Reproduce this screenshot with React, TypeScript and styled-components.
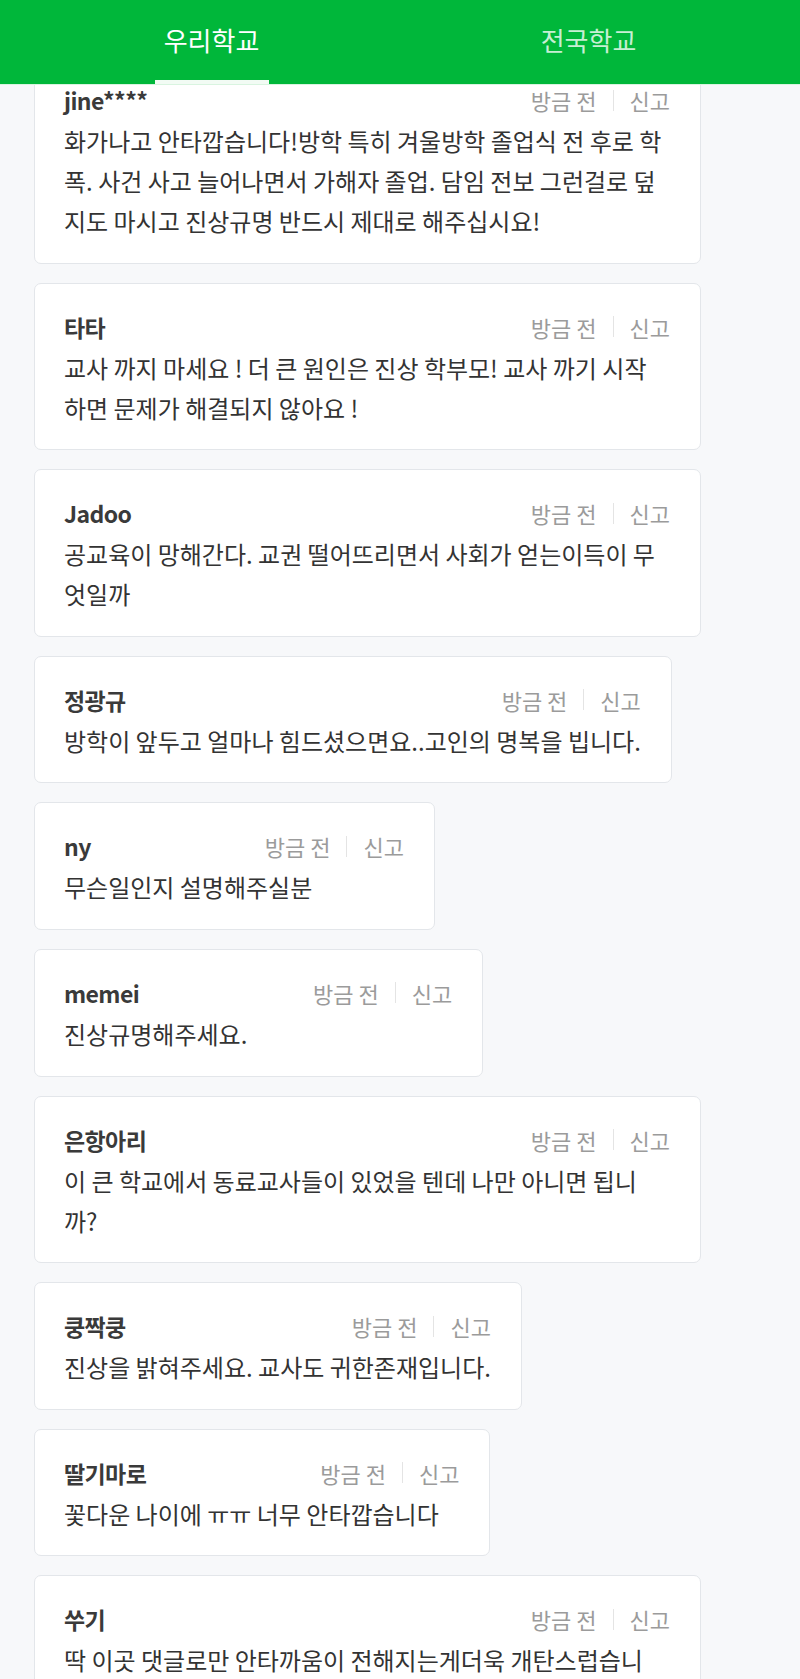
import React from "react";
import styled, { createGlobalStyle } from "styled-components";

const GlobalStyle = createGlobalStyle`
  * { box-sizing: border-box; }
  html, body {
    margin: 0;
    padding: 0;
    background: #f7f8fa;
    font-family: "Noto Sans CJK KR", "Noto Sans", sans-serif;
  }
`;

export const TopBar = styled.header`
  position: fixed;
  top: 0;
  left: 0;
  right: 0;
  z-index: 10;
  height: 85px;
  padding: 0 23px;
  display: flex;
  background: #00b73a;
  border-bottom: 1px solid #d9f4e0;
`;

export const Tab = styled.div<{ $active?: boolean }>`
  position: relative;
  flex: 1;
  display: flex;
  align-items: center;
  justify-content: center;
  padding-bottom: 6px;
  font-size: 26px;
  color: ${(p) => (p.$active ? "#ffffff" : "rgba(255, 255, 255, 0.78)")};

  &::after {
    content: "";
    display: ${(p) => (p.$active ? "block" : "none")};
    position: absolute;
    left: 50%;
    bottom: 0;
    width: 114px;
    height: 4px;
    margin-left: -57px;
    background: #f2fbf4;
  }
`;

export const List = styled.main`
  display: flex;
  flex-direction: column;
  align-items: flex-start;
  gap: 19px;
  padding: 56px 0 40px 34px;
`;

export const Card = styled.article<{ $wide?: boolean }>`
  width: ${(p) => (p.$wide ? "667px" : "auto")};
  max-width: 667px;
  padding: 28px 30px 21.6px 29px;
  background: #ffffff;
  border: 1px solid #e3e6ea;
  border-radius: 7px;
`;

export const CardHead = styled.div`
  display: flex;
  align-items: center;
  height: 30px;
  margin-bottom: 6px;
`;

export const Name = styled.span`
  flex: 1;
  font-size: 23px;
  font-weight: 700;
  letter-spacing: -0.6px;
  color: #3a3a3a;
  white-space: nowrap;
`;

export const Meta = styled.div`
  display: flex;
  align-items: center;
  margin-left: 174px;
  font-size: 22px;
  color: #9b9b9b;
  white-space: nowrap;
`;

export const Divider = styled.span`
  width: 1px;
  height: 21px;
  margin: 0 16px;
  background: #e4e4e4;
`;

export const Body = styled.p`
  margin: 0;
  font-size: 24px;
  line-height: 40px;
  color: #333333;
  white-space: nowrap;
`;

type Comment = { name: string; lines: string[] };

const comments: Comment[] = [
  {
    name: "jine****",
    lines: [
      "화가나고 안타깝습니다!방학 특히 겨울방학 졸업식 전 후로 학",
      "폭. 사건 사고 늘어나면서 가해자 졸업. 담임 전보 그런걸로 덮",
      "지도 마시고 진상규명 반드시 제대로 해주십시요!",
    ],
  },
  {
    name: "타타",
    lines: ["교사 까지 마세요 ! 더 큰 원인은 진상 학부모! 교사 까기 시작", "하면 문제가 해결되지 않아요 !"],
  },
  {
    name: "Jadoo",
    lines: ["공교육이 망해간다. 교권 떨어뜨리면서 사회가 얻는이득이 무", "엇일까"],
  },
  { name: "정광규", lines: ["방학이 앞두고 얼마나 힘드셨으면요..고인의 명복을 빕니다."] },
  { name: "ny", lines: ["무슨일인지 설명해주실분"] },
  { name: "memei", lines: ["진상규명해주세요."] },
  {
    name: "은항아리",
    lines: ["이 큰 학교에서 동료교사들이 있었을 텐데 나만 아니면 됩니", "까?"],
  },
  { name: "쿵짝쿵", lines: ["진상을 밝혀주세요. 교사도 귀한존재입니다."] },
  { name: "딸기마로", lines: ["꽃다운 나이에 ㅠㅠ 너무 안타깝습니다"] },
  {
    name: "쑤기",
    lines: ["딱 이곳 댓글로만 안타까움이 전해지는게더욱 개탄스럽습니", "다."],
  },
];

const CommentCard = ({ name, lines }: Comment) => (
  <Card $wide={lines.length > 1}>
    <CardHead>
      <Name>{name}</Name>
      <Meta>
        <span>방금 전</span>
        <Divider />
        <span>신고</span>
      </Meta>
    </CardHead>
    {lines.map((line, i) => (
      <Body key={i}>{line}</Body>
    ))}
  </Card>
);

const App = () => {
  return (
    <>
      <GlobalStyle />
      <TopBar>
        <Tab $active>우리학교</Tab>
        <Tab>전국학교</Tab>
      </TopBar>
      <List>
        {comments.map((c) => (
          <CommentCard key={c.name} {...c} />
        ))}
      </List>
    </>
  );
};

export default App;
